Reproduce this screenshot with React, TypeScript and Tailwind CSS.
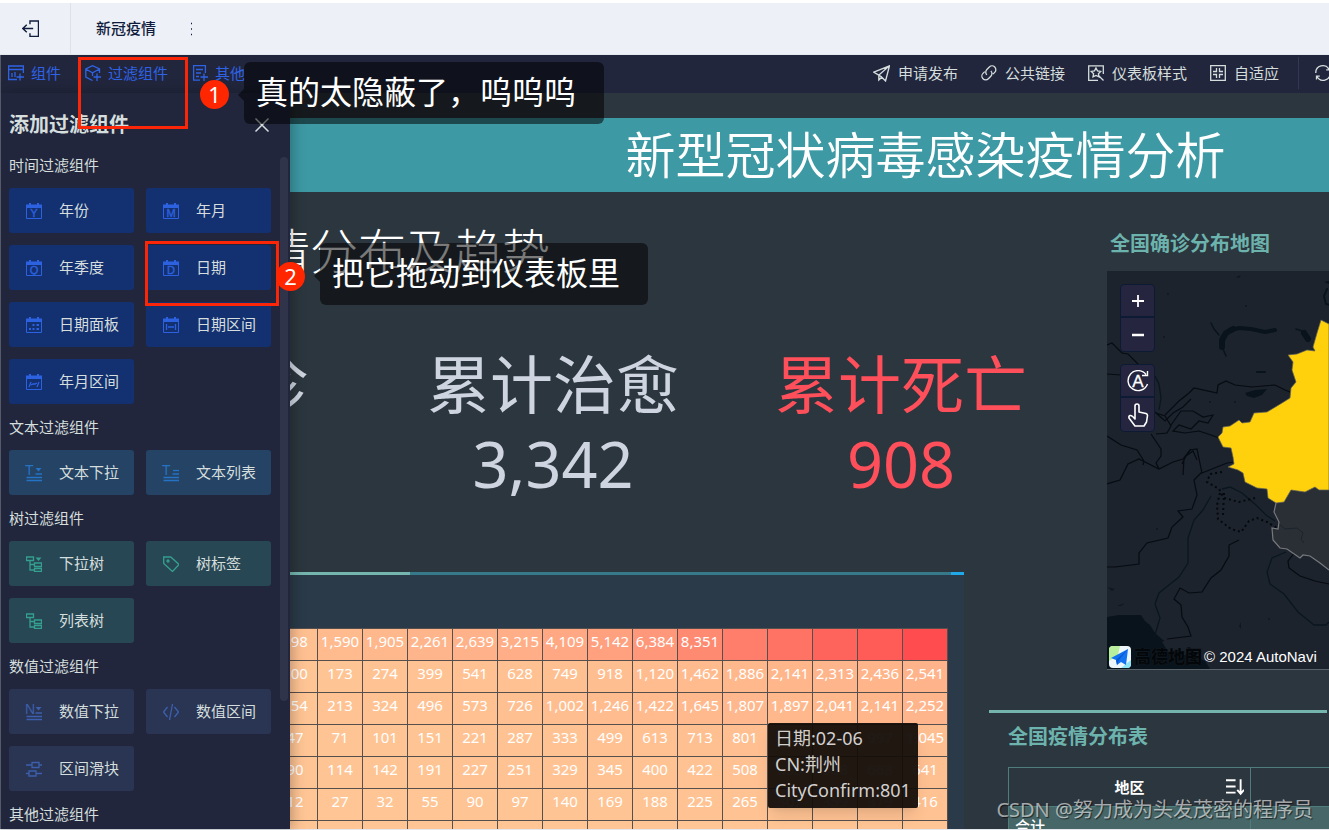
import type { ReactNode } from 'react';
import clsx from 'clsx';

interface IconProps {
  children: ReactNode;
  className?: string;
}

function Icon({ children, className }: IconProps) {
  return (
    <svg
      viewBox="0 0 16 16"
      fill="none"
      stroke="currentColor"
      strokeWidth="1.3"
      className={clsx('size-4 shrink-0', className)}
      aria-hidden="true"
    >
      {children}
    </svg>
  );
}

interface CalendarIconProps {
  letter?: string;
  children?: ReactNode;
}

function CalendarIcon({ letter, children }: CalendarIconProps) {
  return (
    <Icon>
      <path d="M.5 2.5h15v13H.5z" strokeWidth="1" />
      <path d="M0 1.500h16v3.500H0zM3 0h2v2H3zM11 0h2v2h-2z" fill="currentColor" stroke="none" />
      {letter && (
        <text
          x="8"
          y="14"
          textAnchor="middle"
          fontSize="11"
          fontFamily="Liberation Sans, sans-serif"
          fill="currentColor"
          strokeWidth=".4"
        >
          {letter}
        </text>
      )}
      {children}
    </Icon>
  );
}

function LetterIcon({ letter, arrow }: { letter: string; arrow?: boolean }) {
  return (
    <Icon className="overflow-visible">
      <text x="-1" y="10" fontSize="14" fontFamily="Liberation Sans, sans-serif" fill="currentColor" stroke="none">
        {letter}
      </text>
      {arrow ? (
        <path d="M9.500 3h6l-3 3.500z" fill="currentColor" stroke="none" />
      ) : (
        <path d="M10 5.500h6" />
      )}
      <path d="M9.500 9H16M.5 12.500H16M.5 15.500H16" />
    </Icon>
  );
}

function TreeIcon({ arrow }: { arrow?: boolean }) {
  return (
    <Icon>
      <path d="M.5 1h7v3.500h-7zM4 4.500v9.500h4.500M4 8.500h4.500M8.500 7H15.500v3.500H8.500zM8.500 12.500H15.500V15.500H8.500z" />
      {arrow && <path d="M9.500 1.500h6l-3 3.500z" fill="currentColor" stroke="none" />}
    </Icon>
  );
}

interface IFilterGroup {
  title: string;
  tone: string;
  items: { label: string; icon: ReactNode }[];
}

const filterGroups: IFilterGroup[] = [
  {
    title: '时间过滤组件',
    tone: 'bg-[#133071] text-[#2c61df]',
    items: [
      { label: '年份', icon: <CalendarIcon letter="Y" /> },
      { label: '年月', icon: <CalendarIcon letter="M" /> },
      { label: '年季度', icon: <CalendarIcon letter="Q" /> },
      { label: '日期', icon: <CalendarIcon letter="D" /> },
      {
        label: '日期面板',
        icon: (
          <CalendarIcon>
            <path d="M6.500 8h2M10.500 8h2.500M3 12h2M6.500 12h2M10.500 12h2.500" strokeWidth="2" />
          </CalendarIcon>
        ),
      },
      {
        label: '日期区间',
        icon: (
          <CalendarIcon>
            <path d="M3.500 7v6M12.500 7v6M5 10h6" />
          </CalendarIcon>
        ),
      },
      {
        label: '年月区间',
        icon: (
          <CalendarIcon>
            <path d="M3 13l2-5M11 13l2-5M5 11l2-1h2l2-1" />
          </CalendarIcon>
        ),
      },
    ],
  },
  {
    title: '文本过滤组件',
    tone: 'bg-[#244365] text-[#2573c4]',
    items: [
      { label: '文本下拉', icon: <LetterIcon letter="T" arrow /> },
      { label: '文本列表', icon: <LetterIcon letter="T" /> },
    ],
  },
  {
    title: '树过滤组件',
    tone: 'bg-[#274754] text-[#35a08f]',
    items: [
      { label: '下拉树', icon: <TreeIcon arrow /> },
      {
        label: '树标签',
        icon: (
          <Icon>
            <path d="M.7 1h7L16 8.500l-6.500 7L.7 7.500z" />
            <circle cx="5" cy="5" r="1" />
          </Icon>
        ),
      },
      { label: '列表树', icon: <TreeIcon /> },
    ],
  },
  {
    title: '数值过滤组件',
    tone: 'bg-[#293552] text-[#3d5fae]',
    items: [
      { label: '数值下拉', icon: <LetterIcon letter="N" arrow /> },
      {
        label: '数值区间',
        icon: (
          <Icon>
            <path d="M4.500 3L.5 8l4 5M11.500 3l4 5-4 5M9.500 0L6.500 16" />
          </Icon>
        ),
      },
      {
        label: '区间滑块',
        icon: (
          <Icon>
            <path d="M0 4h6M13 4h3M6 1.500h7v5H6zM0 12.500h3M10 12.500h6M3 10h7v5H3z" />
          </Icon>
        ),
      },
    ],
  },
];

const heatRows = [
  [698, 1590, 1905, 2261, 2639, 3215, 4109, 5142, 6384, 8351, 10117, 11618, 13603, 14982, 16902],
  [100, 173, 274, 399, 541, 628, 749, 918, 1120, 1462, 1886, 2141, 2313, 2436, 2541],
  [154, 213, 324, 496, 573, 726, 1002, 1246, 1422, 1645, 1807, 1897, 2041, 2141, 2252],
  [47, 71, 101, 151, 221, 287, 333, 499, 613, 713, 801, 885, 941, 997, 1045],
  [90, 114, 142, 191, 227, 251, 329, 345, 400, 422, 508, 553, 588, 663, 641],
  [12, 27, 32, 55, 90, 97, 140, 169, 188, 225, 265, 307, 359, 379, 416],
];

// labels wider than the cell are dropped
const MAX_LABEL = 9999;

function heatColor(value: number) {
  const t = value / 16902;
  const g = Math.round(197 - 120 * t);
  const b = Math.round(148 - 69 * t);
  return `rgb(255, ${g}, ${b})`;
}

function TopBar() {
  return (
    <header className="flex h-[55px] shrink-0 items-stretch border-t-[3px] border-b border-t-white border-b-[#e3e7ee] bg-[#edf0f6] text-[#101c3d]">
      <button className="flex w-[71px] items-center border-r border-[#dde1e9] pl-[22px]" aria-label="退出">
        <Icon className="size-[17px]">
          <path d="M7.500 4V1h8v14.500h-8v-3M.5 8h10M4.500 4.500L.8 8l3.700 3.500" />
        </Icon>
      </button>
      <h1 className="flex items-center pl-[25px] text-[15px] font-medium">新冠疫情</h1>
      <button className="ml-[27px] flex items-center" aria-label="更多">
        <Icon>
          <path d="M8 2.500h1M8 8h1M8 13.500h1" strokeWidth="1.500" />
        </Icon>
      </button>
    </header>
  );
}

function Toolbar() {
  return (
    <nav className="flex h-[38px] shrink-0 items-center overflow-hidden border-l border-[#555a6b] bg-[#21263c] pb-0.5 pl-[7px] text-[15px] whitespace-nowrap text-[#d5dedd]">
      <div className="flex items-center gap-6 text-[#2f63e6]">
        <button className="flex items-center gap-[7px]">
          <Icon>
            <path d="M15.400 8V1H.6v13.500H9M.6 4.500h14.800M4 8v4M7 7v5M12 8.500v7M8.500 12H16" />
          </Icon>
          组件
        </button>
        <button className="flex items-center gap-[7px]">
          <Icon>
            <path d="M14.500 8V4L7.500.7.8 4v8l6.700 3.500M.8 4l6.700 3.800L14.500 4M7.500 8v3M12 8.500V16M8.500 12H16" />
          </Icon>
          过滤组件
        </button>
        <button className="flex items-center gap-[7px]">
          <Icon>
            <path d="M13.400 8V.7H1.600v14.500H8M4 4.500h7M4 8h5M4 11.500h3M12 8.500V16M8.500 12H16" />
          </Icon>
          其他
        </button>
      </div>
      <div className="-mr-0.5 ml-auto flex items-center gap-[23px]">
        <button className="flex items-center gap-2">
          <Icon className="size-[17px]">
            <path d="M.8 6.800L15.500.8 11.800 15l-3.500-3.500L5.500 14v-4.500zM15.500.8L5.500 9.500l3 2" />
          </Icon>
          申请发布
        </button>
        <button className="flex items-center gap-2">
          <Icon className="-rotate-45 overflow-visible">
            <path d="M6 4H3.500a3.800 3.800 0 0 0 0 7.600H7a3.800 3.800 0 0 0 3.800-3.800M10 11.600h2.500a3.800 3.800 0 0 0 0-7.600H9a3.800 3.800 0 0 0-3.800 3.800" />
          </Icon>
          公共链接
        </button>
        <button className="flex items-center gap-2">
          <Icon>
            <path d="M15.300 9V.8H.7v14.500H10M8 3l1.500 2.900 3.200.5-2.300 2.300.6 3.200L8 10.400l-3 1.500.6-3.200-2.300-2.300 3.200-.5zM10.500 10.500l5 5" />
          </Icon>
          仪表板样式
        </button>
        <button className="flex items-center gap-2">
          <Icon>
            <path d="M.7.7h14.600v14.600H.7zM6.500 3v3.500H3M9.500 3v3.500H13M6.500 13V9.500H3M9.500 13V9.500H13" />
          </Icon>
          自适应
        </button>
        <button className="-ml-1 flex items-center border-l border-[#343951] py-2 pl-4" aria-label="刷新">
          <Icon>
            <path d="M.8 8A7 7 0 0 1 14 4.500M15.200 8A7 7 0 0 1 2 11.500M14.500 1.500v3.300h-3.300M1.500 14.500v-3.300h3.300" />
          </Icon>
        </button>
      </div>
    </nav>
  );
}

function FilterPanel() {
  return (
    <aside className="z-10 flex w-[290px] shrink-0 overflow-hidden border-l border-[#555a6b] bg-[#21263c] text-[#d5dedd] shadow-[3px_0_12px_rgba(0,0,0,0.25)]">
      <div className="w-[279px] shrink-0 pl-2">
        <div className="flex h-[49px] items-center justify-between pt-3.5 pr-2.5">
          <h2 className="text-xl leading-8 font-bold">添加过滤组件</h2>
          <button aria-label="关闭">
            <Icon>
              <path d="M1.500 1.500l13 13M14.500 1.500l-13 13" strokeWidth="1.500" />
            </Icon>
          </button>
        </div>
        {filterGroups.map((group) => (
          <section key={group.title}>
            <h3 className="flex h-[46px] items-center text-[15px]">{group.title}</h3>
            <div className="grid grid-cols-[125px_125px] gap-3">
              {group.items.map((item) => (
                <button
                  key={item.label}
                  className={clsx('flex h-[45px] items-center gap-[17px] rounded-[3px] pl-[17px] text-[15px]', group.tone)}
                >
                  {item.icon}
                  <span className="text-[#d5dedd]">{item.label}</span>
                </button>
              ))}
            </div>
          </section>
        ))}
        <h3 className="flex h-[46px] items-center text-[15px]">其他过滤组件</h3>
      </div>
      <div className="mt-16 h-[544px] w-2 rounded bg-[#30344a]" />
    </aside>
  );
}

function HeatCard() {
  return (
    <div className="relative flex-1 overflow-hidden bg-[#2a3a48]">
      <div className="flex h-[3px]">
        <div className="w-[120px] bg-[#74b5ae]" />
        <div className="flex-1 bg-[#36798b]" />
        <div className="w-[13px] bg-[#1fa9e8]" />
      </div>
      <div className="mt-[53px] flex justify-end overflow-hidden pr-4">
        <table className="w-[676px] shrink-0 table-fixed border-collapse text-center text-[15px] leading-5 text-white">
          <tbody>
            {heatRows.map((row, i) => (
              <tr key={i} className="h-8">
                {row.map((value, j) => (
                  <td key={j} className="border border-[#55504e] p-0 pb-[7px]" style={{ backgroundColor: heatColor(value) }}>
                    {value <= MAX_LABEL && value.toLocaleString('en-US')}
                  </td>
                ))}
              </tr>
            ))}
            <tr className="h-8">
              {heatRows[5].map((_, j) => (
                <td key={j} className="border border-[#55504e] bg-[#ffc594]" />
              ))}
            </tr>
          </tbody>
        </table>
      </div>
      <div className="absolute top-[151px] left-[478px] rounded-xs bg-[#140e0b]/95 px-[7px] pt-0.5 pb-[5px] text-[18px] leading-[26px] text-[#d2d0cf] shadow-lg">
        <p>日期:02-06</p>
        <p>CN:荆州</p>
        <p>CityConfirm:801</p>
      </div>
    </div>
  );
}

function MapTerrain() {
  return (
    <svg viewBox="0 0 222 398" preserveAspectRatio="xMinYMin slice" className="h-full w-full" aria-hidden="true">
      <path fill="#09131b" d="M0 346L12 344L34 344L38 350L43 354L48 362L56 369L70 377L83 376L88 386L98 390L103 398H0z" />
      <path fill="#1c232c" d="M55 371l10-5 14 0 6 4-5 6 2 8-8 0-3-5-10 2-4-7z" />
      <g fill="none" stroke="#09131b" strokeLinecap="round" strokeLinejoin="round">
        <path d="M115 76l0-7 4-7 7-4" strokeWidth="6" />
        <path d="M124 59l8-2 12 1 14 3 10-2" strokeWidth="4" />
        <path d="M116 78l3 7M104 52l3 6 5 6M189 58l6 2" strokeWidth="1.500" />
        <path d="M197 62l4 6" strokeWidth="6" />
        <path d="M150 101l8 0" strokeWidth="2" />
        <path d="M220 18l-3 7 2 8 4 1" strokeWidth="2" />
      </g>
      <path fill="#09131b" d="M138 122l10-3 12-1-5 6-8 3-7-2zM217 11l5-1v3z" />
      <g fill="#0f171f">
        <circle cx="57" cy="66" r="1" />
        <circle cx="61" cy="23" r="1" />
        <circle cx="139" cy="35" r="1" />
        <circle cx="103" cy="131" r="1" />
        <circle cx="128" cy="131" r="1" />
        <circle cx="50" cy="258" r="1" />
        <circle cx="162" cy="348" r="1" />
        <path d="M129 6l5-2-2 3zM132 355l2-4v7zM0 316l8 2-3 2zM10 335l8-3-4 3z" />
      </g>
      <g fill="none" stroke="#0a161f" strokeWidth="1.300">
        <path d="M48 105l4 8 2 14-2 12M104 225l-8 14-9 10-6 18 0 25-9 14-10 8-10 8-4 11 5 14-6 20M115 218l8-2 12 6 14 12 10 10 9 6M179 281l-14 6-5 14 3 12 14 10 14 18 16 13 12 0 3-3" />
      </g>
      <g fill="none" stroke="#070b12" strokeWidth="1.200">
        <path d="M0 74L5 72L15 82L21 83L34 96M0 103L14 104M58 144L72 130L82 122L87 117L110 122L111 114L119 110L128 114L145 116L168 114L178 119L183 121" />
        <path d="M48 141L58 150L66 142L76 136L84 128M64 154L74 140L86 140L96 146L106 144L101 152L92 150L84 158L72 154L66 160L78 162L92 160L104 164L112 167M49 142L58 145L64 155L60 162L49 163M44 163L54 178L54 185L49 192L52 198" />
        <path d="M0 165L14 174L30 179L37 190L36 194M0 213L13 209L21 193L32 188L52 198L66 191L76 188L83 179L90 178L95 202L120 192L127 191M95 201L87 209L90 224L85 238L71 240L76 246L65 256L61 267L40 272L32 282L32 293L8 296L0 296M132 269L122 274L122 285L114 299L104 307L95 321L82 322L73 317L67 328L74 334L75 346L81 356L84 365L60 368" />
        <path d="M189 280L181 290L182 297L193 305L208 310L222 313M76 204L77 188L84 178M75 193L79 185L86 180L90 189" />
      </g>
      <path
        fill="none"
        stroke="#05080d"
        strokeWidth="2"
        strokeDasharray="2 3"
        d="M115 201L103 203L100 211L112 218L117 227L132 231L148 227M113 222L110 234L111 248L124 258L134 261L142 250L150 247L160 251L170 257M117 222L116 244"
      />
      <path
        fill="#2a2f36"
        d="M169 232l-2 9 5 10-1 7-6-1 1 12 7 8 7 1 13 9 3-3 7 1 10 7 9 7v-85l-40 6z"
      />
      <path fill="none" stroke="#1c232a" d="M172 253l6 5 12-1 6 5-2 6 3 4" />
      <path
        fill="none"
        stroke="#77797d"
        strokeWidth="1.200"
        d="M169 232l-2 9 5 10-1 7-6-1 1 12 7 8 7 1 13 9 3-3 7 1 10 7 9 7"
      />
      <path
        fill="#ffd00c"
        stroke="#60625a"
        strokeWidth=".7"
        d="M214 49L210 62L206 76L208 80L200 79L190 83L181 84L186 91L185 99L189 111L184 117L183 127L175 132L160 141L147 142L143 151L135 152L132 149L123 155L116 156L115 162L111 166L116 176L124 177L126 186L127 193L121 196L131 199L136 202L138 211L150 217L160 218L161 227L169 232L177 231L184 219L198 221L208 216L212 219L222 219V53z"
      />
    </svg>
  );
}

const mapButton = 'flex h-[33px] w-full items-center justify-center text-white';

function MapWidget() {
  return (
    <section className="pl-[118px]">
      <h2 className="flex h-[79px] items-center pt-6 pl-[3px] text-xl font-bold whitespace-nowrap text-[#6cb3ad]">
        全国确诊分布地图
      </h2>
      <div className="relative h-[399px] overflow-hidden border-b border-[#5b636a] bg-[#1c232c]">
        <MapTerrain />
        <div className="absolute top-[13px] left-[13px] flex w-[35px] flex-col gap-3">
          <div className="divide-y-2 divide-[#0c1a33] rounded border border-[#0c1a33] bg-[#25253f]">
            <button className={mapButton} aria-label="放大">
              <Icon>
                <path d="M2 8h12M8 2v12" strokeWidth="1.800" />
              </Icon>
            </button>
            <button className={mapButton} aria-label="缩小">
              <Icon>
                <path d="M2 8h12" strokeWidth="2.500" />
              </Icon>
            </button>
          </div>
          <div className="divide-y-2 divide-[#0c1a33] rounded border border-[#0c1a33] bg-[#25253f]">
            <button className={mapButton} aria-label="复位">
              <svg viewBox="0 0 22 22" className="size-[22px]" fill="none" stroke="currentColor" strokeWidth="1.400">
                <path d="M20.500 14A10 10 0 1 1 19 4.500M20.500 1v4.500H15" />
                <text
                  x="11"
                  y="17"
                  textAnchor="middle"
                  fontSize="17"
                  fontFamily="Liberation Sans, sans-serif"
                  fill="currentColor"
                  strokeWidth=".3"
                >
                  A
                </text>
              </svg>
            </button>
            <button className={mapButton} aria-label="选择">
              <svg
                viewBox="0 0 22 24"
                className="h-6 w-[22px]"
                fill="none"
                stroke="currentColor"
                strokeWidth="1.600"
                strokeLinejoin="round"
              >
                <path d="M8 14V3a2 2 0 0 1 4 0v6l7 1.500q1.500.5 1.500 2L19.500 19 17 23H8l-6-8q-.5-2 1-2.500Q5 12 8 16z" />
              </svg>
            </button>
          </div>
        </div>
        <div className="absolute bottom-0 left-0.5 flex items-center">
          <svg viewBox="0 0 22 22" className="size-[22px]" aria-hidden="true">
            <rect width="22" height="22" rx="4" fill="#eef6fb" />
            <path d="M4 0h7L9 9l-9 6V4Q0 0 4 0z" fill="#b9ef9c" />
            <path d="M22 14v4q0 4-4 4h-6z" fill="#8ce4f5" />
            <path d="M19 3L2 12l5 2 1 5 4-3 5 3z" fill="#1272f2" />
            <path d="M19 3L7 14l1 5 2-5z" fill="#0b58cf" />
          </svg>
          <span className="ml-[3px] text-[17px] leading-6 font-black text-[#04070a] [text-shadow:0_0_1px_#222b33]">
            高德地图
          </span>
          <span className="ml-0.5 font-['Liberation_Sans',sans-serif] text-[15px] whitespace-nowrap text-white">
            © 2024 AutoNavi
          </span>
        </div>
      </div>
    </section>
  );
}

function CityTable() {
  return (
    <section className="mt-10 mr-0.5 border-t-[3px] border-[#74b5ae] pl-[19px]">
      <h2 className="flex h-[54px] items-center pb-1.5 text-xl font-bold text-[#6cb3ad]">全国疫情分布表</h2>
      <table className="-mr-0.5 w-[calc(100%+2px)] table-fixed border-collapse text-[15px] text-white">
        <thead>
          <tr className="h-[39px]">
            <th className="w-[242px] border border-[#4f7d7c] p-0">
              <div className="flex items-center pr-1.5">
                <span className="flex-1 pl-6 font-bold">地区</span>
                <Icon className="size-[18px]">
                  <path d="M0 2h8.500M0 7.500h8.500M0 13h8.500M13 1v13M10 10.500l3 3.500 3-3.500" strokeWidth="1.700" />
                </Icon>
              </div>
            </th>
            <th className="border border-r-0 border-[#4f7d7c]" />
          </tr>
        </thead>
        <tbody>
          <tr className="h-[39px] bg-[#476668]">
            <td className="border border-[#4f7d7c] py-0 pl-1.5 font-medium">合计</td>
            <td className="border border-r-0 border-[#4f7d7c]" />
          </tr>
        </tbody>
      </table>
    </section>
  );
}

function Dashboard() {
  return (
    <main className="flex min-w-0 flex-1 flex-col overflow-hidden bg-[#2c363e] pt-[25px]">
      <div className="flex h-[74px] shrink-0 items-center justify-center bg-[#3d99a4] pl-[232px]">
        <h2 className="text-[50px] font-[350] whitespace-nowrap text-white">新型冠状病毒感染疫情分析</h2>
      </div>
      <div className="flex min-h-0 flex-1">
        <div className="flex w-[674px] shrink-0 flex-col">
          <div className="flex h-[118px] w-[260px] shrink-0 items-center justify-end overflow-hidden">
            <h2 className="shrink-0 text-[48px] font-light whitespace-nowrap text-white">情分布及趋势</h2>
          </div>
          <div className="flex h-[262px] shrink-0 pt-[34px] text-center text-[63px] leading-[80px] whitespace-nowrap text-[#ced5e0]">
            <div className="flex w-[89px] shrink-0 justify-end pr-[71px]">诊</div>
            <div className="w-[348px] shrink-0">
              <p>累计治愈</p>
              <p>3,342</p>
            </div>
            <div className="w-[348px] shrink-0 text-[#ff4f5b]">
              <p>累计死亡</p>
              <p>908</p>
            </div>
          </div>
          <HeatCard />
        </div>
        <div className="ml-[25px] min-w-0 flex-1">
          <MapWidget />
          <CityTable />
        </div>
      </div>
    </main>
  );
}

function Marker({ children, className }: IconProps) {
  return (
    <span
      className={clsx(
        'absolute z-20 flex size-[29px] items-center justify-center rounded-full bg-[#ff2600] pb-0.5 text-[22px] leading-none text-white',
        className,
      )}
    >
      {children}
    </span>
  );
}

function Callout({ children, className }: IconProps) {
  return (
    <div
      className={clsx(
        'absolute z-20 flex h-[62px] items-center rounded-md bg-black/52 pr-7 pb-0.5 pl-3 text-[32px] whitespace-nowrap text-white',
        className,
      )}
    >
      <span className="absolute top-[27px] -left-1.5 border-y-6 border-r-6 border-y-transparent border-r-black/52" />
      {children}
    </div>
  );
}

export default function App() {
  return (
    <div className="relative flex h-screen flex-col overflow-hidden bg-[#e4e8ec] pb-px font-['Noto_Sans','Noto_Sans_CJK_SC',sans-serif]">
      <TopBar />
      <Toolbar />
      <div className="flex min-h-0 flex-1">
        <FilterPanel />
        <Dashboard />
      </div>

      <div className="absolute top-[57px] left-[78px] z-20 h-[72px] w-[110px] border-[3px] border-[#fb2508]" />
      <Marker className="top-[80px] left-[200px]">1</Marker>
      <Callout className="top-[62px] left-[244px]">真的太隐蔽了，呜呜呜</Callout>
      <div className="absolute top-[241px] left-[145px] z-20 h-[65px] w-[134px] border-[3px] border-[#fb2508]" />
      <Marker className="top-[262px] left-[276px]">2</Marker>
      <Callout className="top-[243px] left-[320px]">把它拖动到仪表板里</Callout>

      <p className="absolute right-4 bottom-1 z-20 text-xl leading-8 whitespace-nowrap text-white/60 [text-shadow:1px_1px_1px_rgba(0,0,0,0.6)]">
        CSDN @努力成为头发茂密的程序员
      </p>
    </div>
  );
}
